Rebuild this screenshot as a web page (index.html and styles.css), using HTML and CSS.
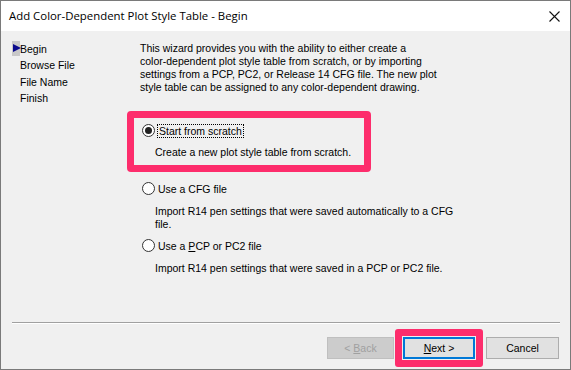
FILE: index.html
```html
<!DOCTYPE html>
<html lang="en">
<head>
    <meta charset="UTF-8">
    <title>Add Color-Dependent Plot Style Table - Begin</title>
    <link rel="stylesheet" href="styles.css">
</head>
<body>
    <div class="window">
        <div class="titlebar">
            <span class="title">Add Color-Dependent Plot Style Table - Begin</span>
            <svg class="close" width="11" height="11" viewBox="0 0 11 11">
                <path d="M0.5 0.5 L10.5 10.5 M10.5 0.5 L0.5 10.5" stroke="#111" stroke-width="1.1" fill="none"/>
            </svg>
        </div>

        <div class="dialog">
            <div class="main">
                <ul class="steps">
                    <li class="current"><span class="marker"></span>Begin</li>
                    <li>Browse File</li>
                    <li>File Name</li>
                    <li>Finish</li>
                </ul>

                <div class="content">
                    <p class="intro">This wizard provides you with the ability to either create a<br>
                        color-dependent plot style table from scratch, or by importing<br>
                        settings from a PCP, PC2, or Release 14 CFG file. The new plot<br>
                        style table can be assigned to any color-dependent drawing.</p>

                    <div class="highlight option-box">
                        <div class="option">
                            <span class="radio checked"></span>
                            <span class="label focused">Start from scratch</span>
                        </div>
                        <p class="desc">Create a new plot style table from scratch.</p>
                    </div>

                    <div class="option">
                        <span class="radio"></span>
                        <span class="label">Use a CFG file</span>
                    </div>
                    <p class="desc">Import R14 pen settings that were saved automatically to a CFG<br>file.</p>

                    <div class="option">
                        <span class="radio"></span>
                        <span class="label">Use a <u>P</u>CP or PC2 file</span>
                    </div>
                    <p class="desc">Import R14 pen settings that were saved in a PCP or PC2 file.</p>
                </div>
            </div>

            <div class="separator"></div>

            <div class="buttons">
                <button class="btn" disabled>&lt; <u>B</u>ack</button>
                <div class="highlight btn-box">
                    <button class="btn default"><u>N</u>ext &gt;</button>
                </div>
                <button class="btn">Cancel</button>
            </div>
        </div>
    </div>
</body>
</html>
```

FILE: styles.css
```css
:root {
    --face: #f0f0f0;
    --pink: #fd2d6c;
    --text: #000;
}

* {
    margin: 0;
    padding: 0;
    box-sizing: border-box;
}

body {
    background: #fff;
    font-family: 'Liberation Sans', Arial, sans-serif;
    font-size: 10.5px;
    color: var(--text);
}

.window {
    width: 571px;
    height: 370px;
    border: 1px solid #7a7a7a;
    background: var(--face);
    display: flex;
    flex-direction: column;
}

.titlebar {
    height: 30px;
    background: #fff;
    display: flex;
    align-items: center;
    justify-content: space-between;
    padding: 0 10px 0 8px;
    flex-shrink: 0;
}

.title {
    font-family: 'Open Sans', 'Noto Sans', sans-serif;
    font-size: 11.4px;
    color: #000;
    padding-bottom: 1px;
}

.close {
    margin-top: 1px;
}

.dialog {
    flex: 1;
    display: flex;
    flex-direction: column;
}

.main {
    display: flex;
    flex: 1;
}

/* wizard steps */
.steps {
    list-style: none;
    width: 139px;
    padding: 10px 0 0 11px;
    flex-shrink: 0;
}

.steps li {
    height: 16.3px;
    line-height: 16px;
    padding-left: 8px;
    position: relative;
}

.steps .marker {
    position: absolute;
    left: 0;
    top: 0;
    width: 8px;
    height: 15px;
    background: #c8c8c8;
}

.steps .marker::after {
    content: '';
    position: absolute;
    left: 1px;
    top: 3px;
    border-left: 8px solid #0a0a8c;
    border-top: 4.5px solid transparent;
    border-bottom: 4.5px solid transparent;
}

.content {
    padding-top: 11px;
    width: 320px;
}

.intro {
    line-height: 13px;
}

.highlight {
    border: 7px solid var(--pink);
    border-radius: 4px;
}

.option-box {
    margin: 17px 0 8px -13px;
    width: 244px;
    padding: 4px 0 6px 6px;
}

.option {
    display: flex;
    align-items: center;
    height: 17px;
    padding-left: 2px;
}

.radio {
    width: 13px;
    height: 13px;
    border: 1px solid #333;
    border-radius: 50%;
    background: #fff;
    position: relative;
    margin-right: 3px;
}

.radio.checked::after {
    content: '';
    position: absolute;
    left: 2px;
    top: 2px;
    width: 7px;
    height: 7px;
    border-radius: 50%;
    background: #222;
}

.label.focused {
    outline: 1px dotted #000;
    outline-offset: 0;
    padding: 0 1px;
}

.desc {
    line-height: 13px;
    padding-left: 15px;
    margin: 8px 0 6px;
}

.option-box .desc {
    margin: 7px 0 0;
}

.separator {
    margin: 0 10px 0 11px;
    border-top: 1px solid #a0a0a0;
    border-bottom: 1px solid #fff;
}

.buttons {
    height: 45px;
    display: flex;
    justify-content: flex-end;
    align-items: flex-start;
    padding: 13px 11px 0 0;
}

.btn {
    width: 73px;
    height: 22px;
    font-family: 'Liberation Sans', Arial, sans-serif;
    font-size: 10.5px;
    background: #e1e1e1;
    border: 1px solid #adadad;
    color: #000;
}

.btn:disabled {
    width: 67px;
    background: #cccccc;
    border-color: #bfbfbf;
    color: #a0a0a0;
}

.btn.default {
    width: 72px;
    border: 2px solid #0078d7;
}

.btn-box {
    border-radius: 3px;
    padding: 1px;
    margin: -8px 3px 0 1px;
}
```
